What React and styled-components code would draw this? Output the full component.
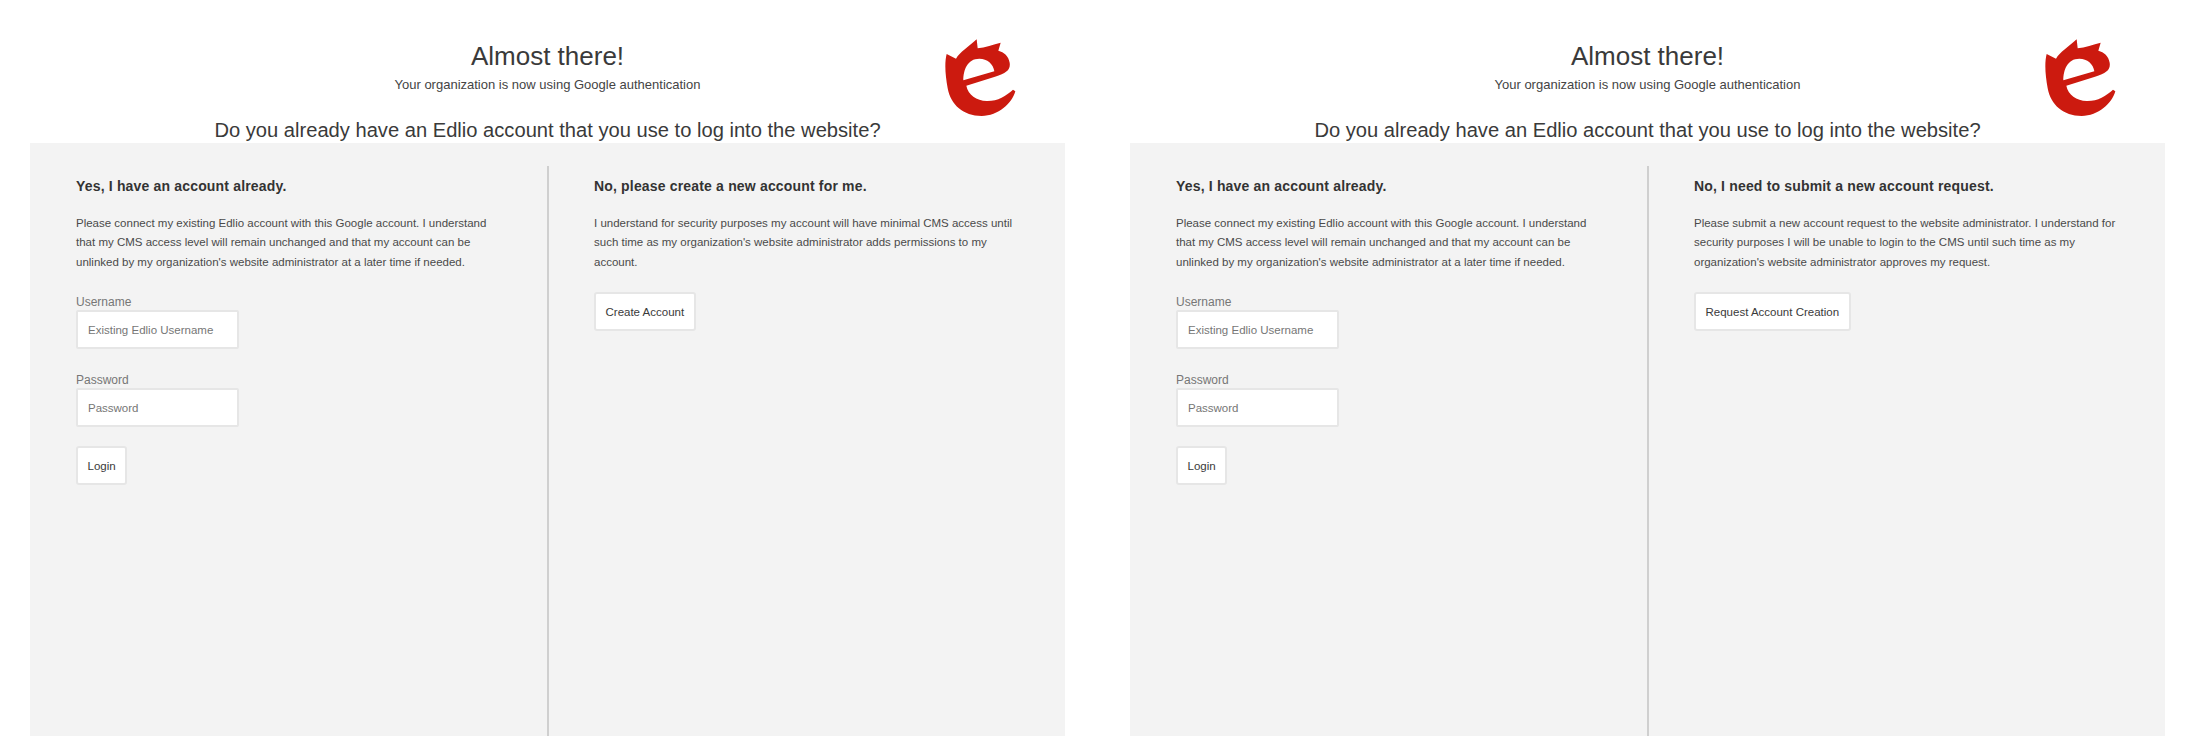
import React from 'react';
import styled, { createGlobalStyle } from 'styled-components';

const GlobalStyle = createGlobalStyle`
  html, body {
    margin: 0;
    padding: 0;
    height: 736px;
    overflow: hidden;
    background: #fff;
    font-family: "Liberation Sans", Arial, sans-serif;
    color: #3a3a3a;
  }
`;

const Screens = styled.div`
  display: flex;
  width: 2200px;
  height: 736px;
`;

const Screen = styled.div`
  flex: 0 0 1100px;
  height: 736px;
  padding: 0 35px 0 30px;
  box-sizing: border-box;
  display: flex;
  flex-direction: column;
`;

const Header = styled.header`
  display: grid;
  grid-template-columns: 1fr auto 1fr;
  height: 118px;
`;

const Intro = styled.div`
  grid-column: 2;
  padding-top: 40px;
  text-align: center;
`;

const Title = styled.h1`
  margin: 0;
  font-size: 26px;
  line-height: 32px;
  font-weight: 400;
`;

const Subtitle = styled.p`
  margin: 3px 0 0;
  font-size: 13px;
  line-height: 20px;
  color: #444;
`;

const Logo = styled.svg`
  grid-column: 3;
  justify-self: end;
  margin: 39px 49px 0 0;
  width: 71px;
  height: 77px;
`;

const Question = styled.h2`
  margin: 0;
  height: 25px;
  font-size: 20.15px;
  line-height: 25px;
  font-weight: 400;
  text-align: center;
`;

const Panel = styled.main`
  flex: 1;
  display: grid;
  grid-template-columns: 517px 1fr;
  padding-top: 23px;
  background: #f3f3f3;
`;

const Column = styled.section`
  padding: 10px 46px 0;
  ${props => props.$divided && 'border-left: 2px solid #cfcfcf; padding-left: 45px;'}
`;

const Heading = styled.h3`
  margin: 0 0 18px;
  font-size: 14px;
  line-height: 20px;
  font-weight: 700;
  letter-spacing: 0.17px;
  color: #333;
`;

const Text = styled.p`
  margin: 0 0 20px;
  font-size: 11.5px;
  line-height: 19.3px;
  color: #4a4a4a;
`;

const Form = styled.form`
  margin-top: 23px;
`;

const Field = styled.div`
  margin-bottom: 24px;

  & + & {
    margin-bottom: 19px;
  }
`;

const Label = styled.label`
  display: block;
  font-size: 12px;
  line-height: 15px;
  color: #767676;
`;

const Input = styled.input`
  display: block;
  width: 163px;
  height: 39px;
  box-sizing: border-box;
  padding: 2px 10px 0;
  background: #fff;
  border: 2px solid #e6e6e6;
  border-radius: 2px;
  font: 11.5px "Liberation Sans", Arial, sans-serif;
  color: #333;

  &::placeholder {
    color: #767676;
    opacity: 1;
  }
`;

const Button = styled.button`
  display: block;
  height: 39px;
  box-sizing: border-box;
  padding: 2px 9.5px 0;
  background: #fff;
  border: 2px solid #e6e6e6;
  border-radius: 3px;
  font: 11.5px "Liberation Sans", Arial, sans-serif;
  color: #3a3a3a;
`;

const EdlioLogo = () => (
  <Logo viewBox="195 57 213 231" aria-hidden="true">
    <path
      fill="#cc1a0f"
      fillRule="evenodd"
      d="M200 102 L228 116 C238 98 268 78 290 58 L293 85 C315 82 340 74 362 68 L355 92 C372 96 386 108 389 128 C392 150 380 158 345 170 L259 197 C264 225 290 242 320 243 C352 244 378 228 399 209 L406 214 C396 250 355 288 305 288 C250 288 212 255 203 205 C196 165 193 130 200 102 Z M250 181 C250 150 262 116 298 116 C322 116 340 132 343 154 Z"
    />
  </Logo>
);

const AccountScreen = ({ children }) => (
  <Screen>
    <Header>
      <Intro>
        <Title>Almost there!</Title>
        <Subtitle>Your organization is now using Google authentication</Subtitle>
      </Intro>
      <EdlioLogo />
    </Header>
    <Question>Do you already have an Edlio account that you use to log into the website?</Question>
    <Panel>
      <Column>
        <Heading>Yes, I have an account already.</Heading>
        <Text>
          Please connect my existing Edlio account with this Google account. I understand
          <br />
          that my CMS access level will remain unchanged and that my account can be
          <br />
          unlinked by my organization's website administrator at a later time if needed.
        </Text>
        <Form>
          <Field>
            <Label>Username</Label>
            <Input placeholder="Existing Edlio Username" />
          </Field>
          <Field>
            <Label>Password</Label>
            <Input placeholder="Password" />
          </Field>
          <Button type="button">Login</Button>
        </Form>
      </Column>
      <Column $divided>{children}</Column>
    </Panel>
  </Screen>
);

const App = () => (
  <>
    <GlobalStyle />
    <Screens>
      <AccountScreen>
        <Heading>No, please create a new account for me.</Heading>
        <Text>
          I understand for security purposes my account will have minimal CMS access until
          <br />
          such time as my organization's website administrator adds permissions to my
          <br />
          account.
        </Text>
        <Button type="button">Create Account</Button>
      </AccountScreen>
      <AccountScreen>
        <Heading>No, I need to submit a new account request.</Heading>
        <Text>
          Please submit a new account request to the website administrator. I understand for
          <br />
          security purposes I will be unable to login to the CMS until such time as my
          <br />
          organization's website administrator approves my request.
        </Text>
        <Button type="button">Request Account Creation</Button>
      </AccountScreen>
    </Screens>
  </>
);

export default App;
